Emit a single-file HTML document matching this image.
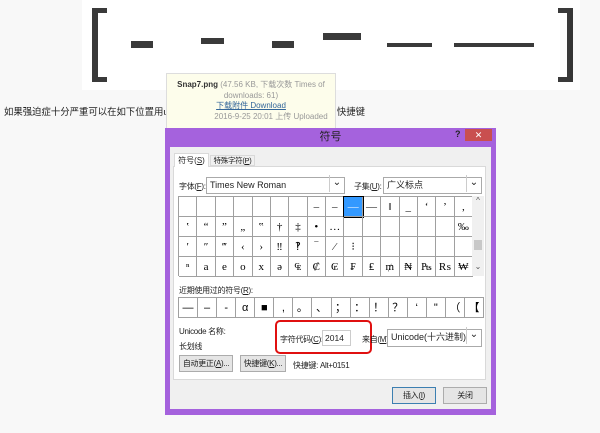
<!DOCTYPE html>
<html><head><meta charset="utf-8"><style>
*{margin:0;padding:0;box-sizing:border-box;white-space:nowrap}
body{width:600px;height:433px;background:#f8f8f8;position:relative;overflow:hidden;font-family:"Liberation Sans","Noto Sans CJK SC",sans-serif;font-size:9px;color:#222}
.a{position:absolute}
.blk{background:#3a3a3a}
.cell{position:absolute;border-right:1px solid #a0a0a0;border-bottom:1px solid #a0a0a0;text-align:center;font-family:"Liberation Serif","Noto Serif CJK SC",serif;font-size:11px;color:#000;overflow:hidden}
.btn{position:absolute;background:#e5e5e5;border:1px solid #acacac;text-align:center;font-size:8px;line-height:15px;letter-spacing:-0.3px;overflow:hidden}
.combo{position:absolute;background:#fff;border:1px solid #aaa;font-size:9px;padding-left:3px;line-height:15px}
.combo:after{content:"⌄";position:absolute;right:0;top:-3px;width:14px;height:17px;border-left:1px solid #ccc;text-align:center;font-size:10px}
.l{position:absolute;font-size:8px;letter-spacing:-0.3px}
</style></head><body>
<div class="a" style="left:82px;top:0;width:498px;height:90px;background:#fff"></div>
<div class="a blk" style="left:92px;top:8px;width:6px;height:74px"></div>
<div class="a blk" style="left:92px;top:8px;width:15px;height:5px"></div>
<div class="a blk" style="left:92px;top:77px;width:15px;height:5px"></div>
<div class="a blk" style="left:567px;top:8px;width:6px;height:74px"></div>
<div class="a blk" style="left:558px;top:8px;width:15px;height:5px"></div>
<div class="a blk" style="left:558px;top:77px;width:15px;height:5px"></div>
<div class="a blk" style="left:131px;top:41px;width:22px;height:7px"></div>
<div class="a blk" style="left:201px;top:38px;width:23px;height:6px"></div>
<div class="a blk" style="left:272px;top:41px;width:22px;height:7px"></div>
<div class="a blk" style="left:323px;top:33px;width:38px;height:7px"></div>
<div class="a blk" style="left:387px;top:43px;width:45px;height:4px"></div>
<div class="a blk" style="left:454px;top:43px;width:80px;height:4px"></div>
<div class="a" style="left:4px;top:104px;font-size:9.4px;white-space:nowrap">如果强迫症十分严重可以在如下位置用unicode来输入或者直接用输入或者直接用快捷键</div>
<div class="a" style="left:166px;top:73px;width:170px;height:56px;background:#fdfdeb;border:1px solid #ddd;text-align:center;font-size:8px;line-height:10.5px;padding-top:6px;color:#999">
<b style="color:#333">Snap7.png</b> (47.56 KB, 下载次数 Times of<br>downloads: 61)<br><span style="color:#336699;text-decoration:underline">下载附件 Download</span><br><span style="padding-left:40px">2016-9-25 20:01 上传 Uploaded</span></div>
<div class="a" style="left:165px;top:128px;width:331px;height:287px;background:#a562dd"></div>
<div class="a" style="left:165px;top:128px;width:331px;height:19px;text-align:center;font-size:11px;line-height:19px;color:#222">符号</div>
<div class="a" style="left:455px;top:129px;font-size:9px;font-weight:bold">?</div>
<div class="a" style="left:465px;top:129px;width:27px;height:12px;background:#c94f4f;color:#fff;text-align:center;font-size:9px;line-height:12px">✕</div>
<div class="a" style="left:170px;top:147px;width:321px;height:262px;background:#f0f0f0"></div>
<div class="a" style="left:173px;top:166px;width:313px;height:214px;background:#fff;border:1px solid #d9d9d9"></div>
<div class="a" style="left:174px;top:153px;width:35px;height:14px;background:#fff;border:1px solid #d9d9d9;border-bottom:none;font-size:8px;text-align:center;line-height:13px">符号(<u>S</u>)</div>
<div class="a" style="left:210px;top:155px;width:45px;height:11px;background:#f0f0f0;border:1px solid #d9d9d9;font-size:7.5px;text-align:center;line-height:10px;letter-spacing:-0.3px">特殊字符(<u>P</u>)</div>
<div class="l" style="left:179px;top:181px">字体(<u>F</u>):</div>
<div class="combo" style="left:206px;top:177px;width:139px;height:17px">Times New Roman</div>
<div class="l" style="left:354px;top:181px">子集(<u>U</u>):</div>
<div class="combo" style="left:383px;top:177px;width:99px;height:17px">广义标点</div>
<div class="a" style="left:178px;top:196px;width:295px;height:80px;border-left:1px solid #a0a0a0;border-top:1px solid #a0a0a0" id="g"></div>
<div class="a" style="left:472px;top:196px;width:12px;height:80px;background:#f0f0f0;font-size:8px;text-align:center;color:#555">^<div style="position:absolute;top:44px;left:2px;width:8px;height:10px;background:#c8c8c8"></div><div style="position:absolute;top:66px;width:12px">⌄</div></div>
<div class="a" style="left:178px;top:297px;width:306px;height:21px;border-left:1px solid #a0a0a0;border-top:1px solid #a0a0a0" id="r"></div>
<div class="l" style="left:179px;top:285px">近期使用过的符号(<u>R</u>):</div>
<div class="l" style="left:179px;top:326px">Unicode 名称:</div>
<div class="l" style="left:179px;top:341px">长划线</div>
<div class="l" style="left:280px;top:334px">字符代码(<u>C</u>):</div>
<div class="a" style="left:322px;top:330px;width:29px;height:16px;background:#fff;border:1px solid #ccc;font-size:8.5px;line-height:14px;padding-left:2px">2014</div>
<div class="a" style="left:275px;top:320px;width:97px;height:34px;border:2px solid #e01010;border-radius:5px"></div>
<div class="l" style="left:362px;top:334px">来自(<u>M</u>):</div>
<div class="combo" style="left:387px;top:329px;width:95px;height:18px">Unicode(十六进制)</div>
<div class="btn" style="left:179px;top:355px;width:54px;height:17px">自动更正(<u>A</u>)...</div>
<div class="btn" style="left:240px;top:355px;width:46px;height:17px">快捷键(<u>K</u>)...</div>
<div class="l" style="left:293px;top:360px">快捷键: Alt+0151</div>
<div class="btn" style="left:392px;top:387px;width:44px;height:17px;border-color:#3c7fb1">插入(<u>I</u>)</div>
<div class="btn" style="left:443px;top:387px;width:44px;height:17px">关闭</div>
<script>
var g=document.getElementById('g');
var rows=[["","","","","","","","–","–","—","―","‖","_","‘","’","‚"],["‛","“","”","„","‟","†","‡","•","…","","","","","","","‰"],["′","″","‴","‹","›","‼","‽","‾","⁄","⁝","","","","","",""],["ⁿ","a","e","o","x","ə","₠","₡","₢","₣","₤","₥","₦","₧","₨","₩"]];
var w=294/16;
rows.forEach(function(r,i){r.forEach(function(c,j){var d=document.createElement('div');d.className='cell';d.style.left=(j*w)+'px';d.style.top=(i*20)+'px';d.style.width=w+'px';d.style.height='20px';d.style.lineHeight='20px';d.textContent=c;if(i==0&&j==9){d.style.background='#3399ff';d.style.color='#fff';d.style.outline='1px solid #000'}g.appendChild(d)})});
var r=document.getElementById('r');var rc=["—","–","-","α","■",",","。","、","；","：","！","？","‘","\"","（","【"];var rw=305/16;
rc.forEach(function(c,j){var d=document.createElement('div');d.className='cell';d.style.left=(j*rw)+'px';d.style.top='0';d.style.width=rw+'px';d.style.height='20px';d.style.lineHeight='20px';d.style.fontFamily='"Liberation Sans","Noto Sans CJK SC",sans-serif';d.textContent=c;r.appendChild(d)});
</script>
</body></html>
